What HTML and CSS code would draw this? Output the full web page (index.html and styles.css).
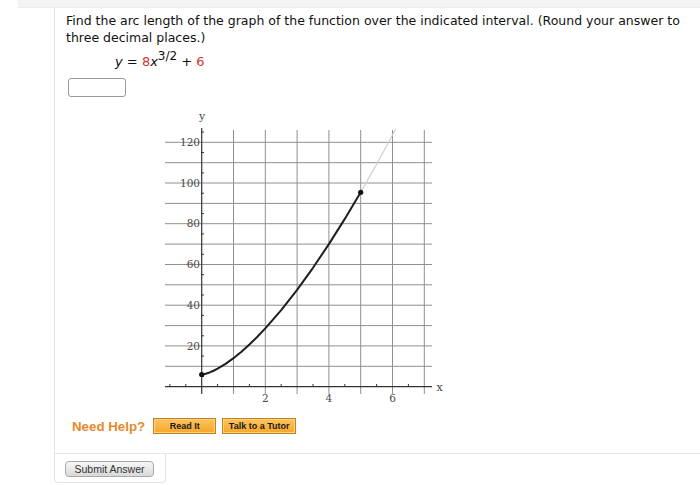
FILE: index.html
```html
<!DOCTYPE html>
<html>
<head>
<meta charset="utf-8">
<link rel="stylesheet" href="styles.css">
</head>
<body>
<div class="topbar"></div>
<div class="panel">
  <p class="question">Find the arc length of the graph of the function over the indicated interval. (Round your answer to three decimal places.)</p>
  <div class="equation"><i>y</i> = <span class="red">8</span><i>x</i><sup>3/2</sup> + <span class="red">6</span></div>
  <input class="answer" type="text">
  <svg class="graph" width="300" height="300" viewBox="0 0 300 300">
    <g stroke="#8f8f8f" stroke-width="1" fill="none">
      <line x1="15" y1="34.3" x2="282" y2="34.3"/>
      <line x1="15" y1="54.7" x2="282" y2="54.7"/>
      <line x1="15" y1="75.0" x2="282" y2="75.0"/>
      <line x1="15" y1="95.4" x2="282" y2="95.4"/>
      <line x1="15" y1="115.7" x2="282" y2="115.7"/>
      <line x1="15" y1="136.1" x2="282" y2="136.1"/>
      <line x1="15" y1="156.5" x2="282" y2="156.5"/>
      <line x1="15" y1="176.8" x2="282" y2="176.8"/>
      <line x1="15" y1="197.2" x2="282" y2="197.2"/>
      <line x1="15" y1="217.6" x2="282" y2="217.6"/>
      <line x1="15" y1="237.9" x2="282" y2="237.9"/>
      <line x1="15" y1="258.3" x2="282" y2="258.3"/>
      <line x1="83.5" y1="22" x2="83.5" y2="286"/>
      <line x1="115.3" y1="22" x2="115.3" y2="286"/>
      <line x1="147.1" y1="22" x2="147.1" y2="286"/>
      <line x1="178.9" y1="22" x2="178.9" y2="286"/>
      <line x1="210.7" y1="22" x2="210.7" y2="286"/>
      <line x1="242.5" y1="22" x2="242.5" y2="286"/>
      <line x1="274.3" y1="22" x2="274.3" y2="286"/>
    </g>
    <g stroke="#333" stroke-width="1.2">
      <line x1="51.7" y1="20" x2="51.7" y2="286"/>
      <line x1="15" y1="278.7" x2="282" y2="278.7"/>
    </g>
    <g stroke="#333" stroke-width="1">
      <line x1="51" y1="24.1" x2="54" y2="24.1"/>
      <line x1="51" y1="44.5" x2="54" y2="44.5"/>
      <line x1="51" y1="64.9" x2="54" y2="64.9"/>
      <line x1="51" y1="85.2" x2="54" y2="85.2"/>
      <line x1="51" y1="105.6" x2="54" y2="105.6"/>
      <line x1="51" y1="125.9" x2="54" y2="125.9"/>
      <line x1="51" y1="146.3" x2="54" y2="146.3"/>
      <line x1="51" y1="166.7" x2="54" y2="166.7"/>
      <line x1="51" y1="187.0" x2="54" y2="187.0"/>
      <line x1="51" y1="207.4" x2="54" y2="207.4"/>
      <line x1="51" y1="227.8" x2="54" y2="227.8"/>
      <line x1="51" y1="248.1" x2="54" y2="248.1"/>
      <line x1="51" y1="268.5" x2="54" y2="268.5"/>
      <line x1="67.6" y1="276" x2="67.6" y2="279"/>
      <line x1="99.4" y1="276" x2="99.4" y2="279"/>
      <line x1="131.2" y1="276" x2="131.2" y2="279"/>
      <line x1="163.0" y1="276" x2="163.0" y2="279"/>
      <line x1="194.8" y1="276" x2="194.8" y2="279"/>
      <line x1="226.6" y1="276" x2="226.6" y2="279"/>
      <line x1="258.4" y1="276" x2="258.4" y2="279"/>
      <line x1="35.8" y1="276" x2="35.8" y2="279"/>
      <line x1="19.9" y1="276" x2="19.9" y2="279"/>
    </g>
    <g class="lbl" text-anchor="end">
      <text x="50" y="38">120</text>
      <text x="50" y="78.7">100</text>
      <text x="50" y="119.4">80</text>
      <text x="50" y="160.2">60</text>
      <text x="50" y="200.9">40</text>
      <text x="50" y="241.6">20</text>
    </g>
    <g class="lbl" text-anchor="middle">
      <text x="115.3" y="294">2</text>
      <text x="178.9" y="294">4</text>
      <text x="242.5" y="294">6</text>
      <text x="52" y="12" class="axl">y</text>
      <text x="289.5" y="282.5" class="axl">x</text>
    </g>
    <polyline fill="none" stroke="#cfcfcf" stroke-width="1.2" points="210.7,84.3 226.6,56.3 242.5,27.0 245.7,21.0"/>
    <polyline fill="none" stroke="#1e1e1e" stroke-width="2" stroke-linejoin="round" stroke-linecap="round" points="51.7,266.5 53.69,266.22 55.7,265.76 59.65,264.44 63.6,262.74 67.6,260.72 75.55,255.89 83.5,250.18 91.45,243.7 99.4,236.53 107.35,228.75 115.3,220.38 131.2,202.1 147.1,181.8 163.0,159.8 178.9,136.1 194.8,110.9 210.7,84.3"/>
    <circle cx="51.7" cy="266.5" r="2.6" fill="#111"/>
    <circle cx="210.7" cy="84.3" r="2.6" fill="#111"/>
  </svg>
  <div class="help">
    <span class="help-label">Need Help?</span>
    <span class="obtn btn-read">Read It</span>
    <span class="obtn btn-tutor">Talk to a Tutor</span>
  </div>
</div>
<div class="submit-box">
  <span class="submit">Submit Answer</span>
</div>
</body>
</html>
```
FILE: styles.css
```css
html, body {
  margin: 0;
  padding: 0;
  background: #fff;
}
body {
  font-family: "DejaVu Sans", Verdana, sans-serif;
  color: #111;
}
.topbar {
  margin-left: 18px;
  height: 7px;
  background: #f4f4f4;
  border-bottom: 1px solid #ececec;
}
.panel {
  margin-left: 54px;
  border-left: 1px solid #e4e4e4;
  border-bottom: 1px solid #e4e4e4;
  padding: 4px 0 17px 11px;
}
.question {
  margin: 0;
  font-size: 12.5px;
  line-height: 17px;
  padding-right: 8px;
}
.equation {
  margin-top: 6px;
  padding-left: 49px;
  font-size: 13px;
  line-height: 20px;
  height: 20px;
}
.equation sup {
  font-size: 12px;
  line-height: 0;
  position: relative;
  vertical-align: 0;
  top: -6px;
}
.red {
  color: #d0342c;
}
.answer {
  display: block;
  margin: 6px 0 0 2px;
  width: 58px;
  height: 19px;
  box-sizing: border-box;
  border: 1px solid #9a9a9a;
  border-radius: 3px;
  padding: 0;
  background: #fff;
}
.graph {
  display: block;
  margin: 11px 0 0 84px;
}
.lbl text {
  font-family: "DejaVu Serif", "Liberation Serif", serif;
  font-size: 10.5px;
  fill: #4a4a4a;
}
.lbl .axl {
  font-size: 11px;
  fill: #444;
}
.help {
  margin-top: 8px;
  height: 20px;
  display: flex;
  align-items: center;
  padding-left: 6px;
}
.help-label {
  font-family: "Liberation Sans", Arial, sans-serif;
  font-weight: bold;
  font-size: 13.3px;
  color: #e8892b;
  margin-right: 8px;
}
.obtn {
  display: flex;
  align-items: center;
  justify-content: center;
  height: 16px;
  box-sizing: border-box;
  border: 1px solid #c8801d;
  box-shadow: inset 0 0 0 1px #fdd383;
  background: linear-gradient(#fcc45e, #f6a62a);
  font-family: "Liberation Sans", Arial, sans-serif;
  font-weight: bold;
  font-size: 9px;
  color: #1a1a1a;
}
.btn-read {
  width: 63px;
  margin-right: 6px;
}
.btn-tutor {
  width: 74px;
}
.submit-box {
  margin-left: 54px;
  width: 112px;
  height: 29px;
  box-sizing: border-box;
  border: 1px solid #e4e4e4;
  border-top: none;
  border-radius: 0 0 4px 4px;
  padding: 7px 0 0 10px;
}
.submit {
  display: flex;
  align-items: center;
  justify-content: center;
  width: 89px;
  height: 16px;
  box-sizing: border-box;
  border: 1px solid #a9a9a9;
  border-radius: 4px;
  background: linear-gradient(#f7f7f7, #d9d9d9);
  font-family: "Liberation Sans", Arial, sans-serif;
  font-size: 10.5px;
  color: #333;
}
```
